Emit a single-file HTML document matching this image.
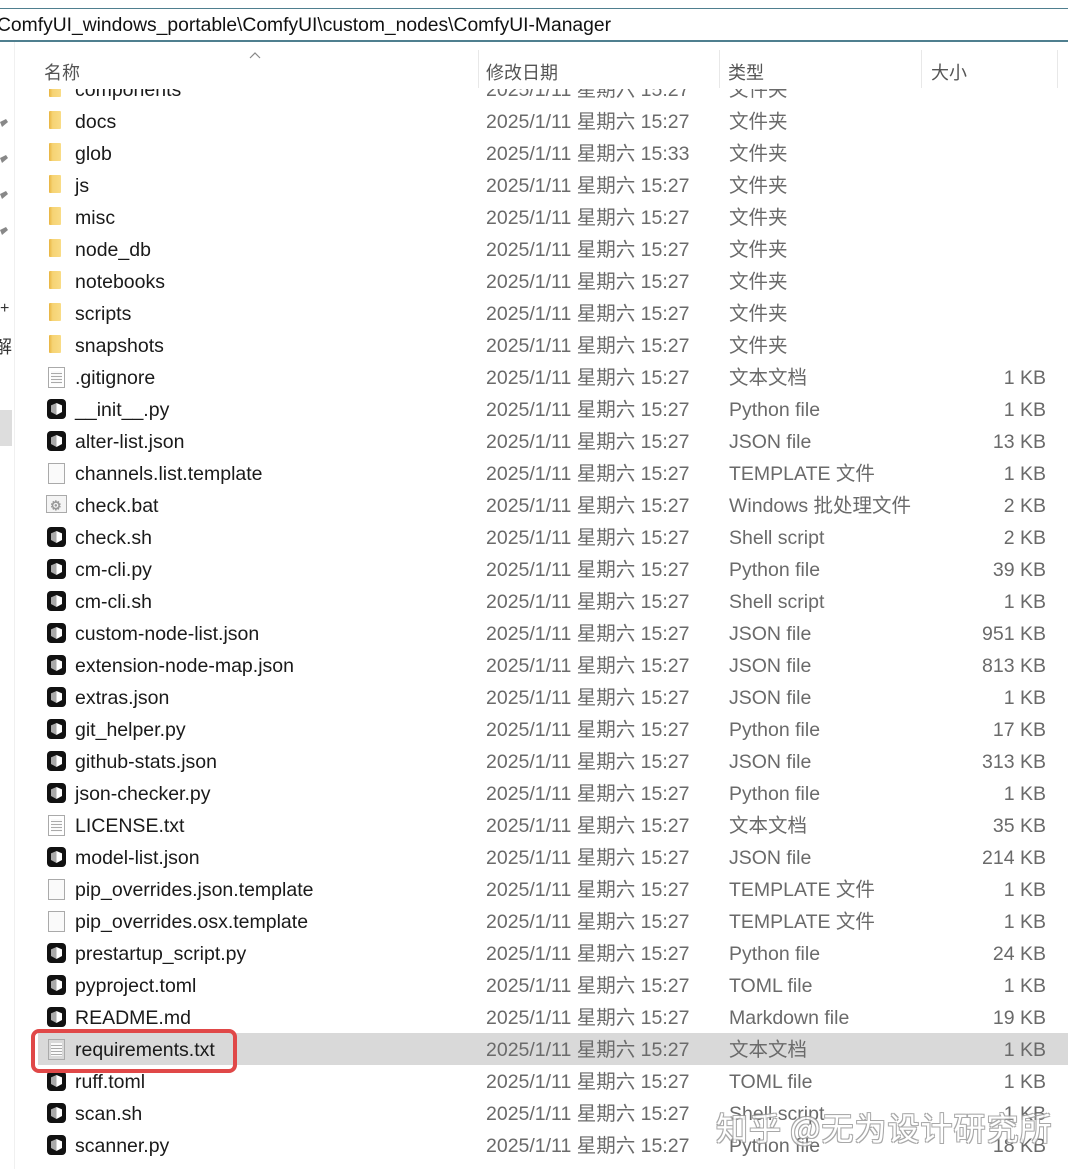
<!DOCTYPE html>
<html><head><meta charset="utf-8">
<style>
*{margin:0;padding:0;box-sizing:border-box}
body{width:1068px;height:1169px;overflow:hidden;background:#fff;position:relative;font-family:"Liberation Sans","Noto Sans CJK SC",sans-serif;}
.addr{position:absolute;left:0;top:8px;width:1068px;height:34px;border-top:1px solid #4f7f8f;border-bottom:2px solid #4f7f8f;}
.addr span{position:absolute;left:-3px;top:1px;line-height:32px;font-size:19.3px;color:#111;white-space:nowrap}
.nav{position:absolute;left:0;top:42px;width:15px;height:1127px;border-right:1px solid #f0f0f0}
.hdr{position:absolute;left:16px;top:42px;width:1052px;height:47px;background:#fff;z-index:2}
.hdr span{position:absolute;top:17px;line-height:28px;font-size:18px;color:#555}
.hdr i{position:absolute;top:8px;width:1px;height:38px;background:#e8e8e8}
.list{position:absolute;left:0;top:73px;width:1068px;z-index:1}
.r{position:relative;height:32px;font-size:19.5px;white-space:nowrap;line-height:32px}
.r span{position:absolute;top:1px;height:32px;line-height:32px}
.r .n{left:75px;color:#1a1a1a}
.r .d{left:486px;color:#6a6a6a}
.r .t{left:729px;color:#6a6a6a}
.r .s{right:22px;color:#6a6a6a}
.sel{background:#d9d9d9;margin-left:38px}
.sel .n{left:37px}.sel .d{left:448px}.sel .t{left:691px}
.ic{position:absolute;left:47px;top:6px;width:19px;height:20px}
.f{left:49px;width:12px;height:18px;background:linear-gradient(90deg,#e8b440 0,#f6d374 30%,#f9dc86 100%);border-radius:1px}
.p{background:#111;border-radius:4px}
.p:after{content:"";position:absolute;left:4px;top:4px;width:11px;height:12px;background:linear-gradient(90deg,#aaa 50%,#fff 50%);clip-path:polygon(0 20%,50% 0,100% 20%,100% 75%,50% 100%,0 75%)}
.doc,.b{left:48px;width:17px;height:21px;background:#fafafa;border:1px solid #aaa}
.doc{background:repeating-linear-gradient(180deg,#fafafa 0 2px,#aaa 2px 3px);background-clip:content-box;padding:3px 2px}
.g{left:46px;width:21px;height:18px;border:1px solid #aaa;background:#f4f4f4}
.g:after{content:"⚙";position:absolute;left:3px;top:-6px;font-size:13px;color:#999}
.box{position:absolute;left:31px;top:1029px;width:206px;height:44px;border:4px solid #e04848;border-radius:8px;z-index:3}
.wm{position:absolute;left:716px;top:1104px;font-size:32px;color:#fff;z-index:4;letter-spacing:1px;text-shadow:1px 1px 0 #999,-1px -1px 0 #999,1px -1px 0 #999,-1px 1px 0 #999;font-family:"Noto Sans CJK SC",sans-serif;opacity:.85}
</style></head><body>
<div class="addr"><span>ComfyUI_windows_portable\ComfyUI\custom_nodes\ComfyUI-Manager</span></div>
<div class="nav"></div>
<div style="position:absolute;left:0;top:410px;width:12px;height:36px;background:#ddd"></div>
<div style="position:absolute;left:0;top:300px;font-size:16px;color:#333">+</div>
<div style="position:absolute;left:-6px;top:333px;font-size:18px;color:#333;font-family:'Noto Sans CJK SC',sans-serif">解</div>
<svg style="position:absolute;left:0;top:118px" width="10" height="130"><g fill="#888"><path d="M0 4l6-3 2 3-6 5z"/><path d="M0 40l6-3 2 3-6 5z"/><path d="M0 76l6-3 2 3-6 5z"/><path d="M0 112l6-3 2 3-6 5z"/></g></svg>
<div class="hdr">
<svg style="position:absolute;left:233px;top:9px" width="12" height="8"><path d="M1 7l5-5 5 5" fill="none" stroke="#888" stroke-width="1.2"/></svg>
<span style="left:28px">名称</span><i style="left:462px"></i>
<span style="left:470px">修改日期</span><i style="left:703px"></i>
<span style="left:712px">类型</span><i style="left:905px"></i>
<span style="left:915px">大小</span><i style="left:1041px"></i>
</div>
<div class="list">
<div class="r"><b class="ic f"></b><span class="n">components</span><span class="d">2025/1/11 星期六 15:27</span><span class="t">文件夹</span></div>
<div class="r"><b class="ic f"></b><span class="n">docs</span><span class="d">2025/1/11 星期六 15:27</span><span class="t">文件夹</span></div>
<div class="r"><b class="ic f"></b><span class="n">glob</span><span class="d">2025/1/11 星期六 15:33</span><span class="t">文件夹</span></div>
<div class="r"><b class="ic f"></b><span class="n">js</span><span class="d">2025/1/11 星期六 15:27</span><span class="t">文件夹</span></div>
<div class="r"><b class="ic f"></b><span class="n">misc</span><span class="d">2025/1/11 星期六 15:27</span><span class="t">文件夹</span></div>
<div class="r"><b class="ic f"></b><span class="n">node_db</span><span class="d">2025/1/11 星期六 15:27</span><span class="t">文件夹</span></div>
<div class="r"><b class="ic f"></b><span class="n">notebooks</span><span class="d">2025/1/11 星期六 15:27</span><span class="t">文件夹</span></div>
<div class="r"><b class="ic f"></b><span class="n">scripts</span><span class="d">2025/1/11 星期六 15:27</span><span class="t">文件夹</span></div>
<div class="r"><b class="ic f"></b><span class="n">snapshots</span><span class="d">2025/1/11 星期六 15:27</span><span class="t">文件夹</span></div>
<div class="r"><b class="ic doc"></b><span class="n">.gitignore</span><span class="d">2025/1/11 星期六 15:27</span><span class="t">文本文档</span><span class="s">1 KB</span></div>
<div class="r"><b class="ic p"></b><span class="n">__init__.py</span><span class="d">2025/1/11 星期六 15:27</span><span class="t">Python file</span><span class="s">1 KB</span></div>
<div class="r"><b class="ic p"></b><span class="n">alter-list.json</span><span class="d">2025/1/11 星期六 15:27</span><span class="t">JSON file</span><span class="s">13 KB</span></div>
<div class="r"><b class="ic b"></b><span class="n">channels.list.template</span><span class="d">2025/1/11 星期六 15:27</span><span class="t">TEMPLATE 文件</span><span class="s">1 KB</span></div>
<div class="r"><b class="ic g"></b><span class="n">check.bat</span><span class="d">2025/1/11 星期六 15:27</span><span class="t">Windows 批处理文件</span><span class="s">2 KB</span></div>
<div class="r"><b class="ic p"></b><span class="n">check.sh</span><span class="d">2025/1/11 星期六 15:27</span><span class="t">Shell script</span><span class="s">2 KB</span></div>
<div class="r"><b class="ic p"></b><span class="n">cm-cli.py</span><span class="d">2025/1/11 星期六 15:27</span><span class="t">Python file</span><span class="s">39 KB</span></div>
<div class="r"><b class="ic p"></b><span class="n">cm-cli.sh</span><span class="d">2025/1/11 星期六 15:27</span><span class="t">Shell script</span><span class="s">1 KB</span></div>
<div class="r"><b class="ic p"></b><span class="n">custom-node-list.json</span><span class="d">2025/1/11 星期六 15:27</span><span class="t">JSON file</span><span class="s">951 KB</span></div>
<div class="r"><b class="ic p"></b><span class="n">extension-node-map.json</span><span class="d">2025/1/11 星期六 15:27</span><span class="t">JSON file</span><span class="s">813 KB</span></div>
<div class="r"><b class="ic p"></b><span class="n">extras.json</span><span class="d">2025/1/11 星期六 15:27</span><span class="t">JSON file</span><span class="s">1 KB</span></div>
<div class="r"><b class="ic p"></b><span class="n">git_helper.py</span><span class="d">2025/1/11 星期六 15:27</span><span class="t">Python file</span><span class="s">17 KB</span></div>
<div class="r"><b class="ic p"></b><span class="n">github-stats.json</span><span class="d">2025/1/11 星期六 15:27</span><span class="t">JSON file</span><span class="s">313 KB</span></div>
<div class="r"><b class="ic p"></b><span class="n">json-checker.py</span><span class="d">2025/1/11 星期六 15:27</span><span class="t">Python file</span><span class="s">1 KB</span></div>
<div class="r"><b class="ic doc"></b><span class="n">LICENSE.txt</span><span class="d">2025/1/11 星期六 15:27</span><span class="t">文本文档</span><span class="s">35 KB</span></div>
<div class="r"><b class="ic p"></b><span class="n">model-list.json</span><span class="d">2025/1/11 星期六 15:27</span><span class="t">JSON file</span><span class="s">214 KB</span></div>
<div class="r"><b class="ic b"></b><span class="n">pip_overrides.json.template</span><span class="d">2025/1/11 星期六 15:27</span><span class="t">TEMPLATE 文件</span><span class="s">1 KB</span></div>
<div class="r"><b class="ic b"></b><span class="n">pip_overrides.osx.template</span><span class="d">2025/1/11 星期六 15:27</span><span class="t">TEMPLATE 文件</span><span class="s">1 KB</span></div>
<div class="r"><b class="ic p"></b><span class="n">prestartup_script.py</span><span class="d">2025/1/11 星期六 15:27</span><span class="t">Python file</span><span class="s">24 KB</span></div>
<div class="r"><b class="ic p"></b><span class="n">pyproject.toml</span><span class="d">2025/1/11 星期六 15:27</span><span class="t">TOML file</span><span class="s">1 KB</span></div>
<div class="r"><b class="ic p"></b><span class="n">README.md</span><span class="d">2025/1/11 星期六 15:27</span><span class="t">Markdown file</span><span class="s">19 KB</span></div>
<div class="r sel"><b class="ic doc" style="left:10px"></b><span class="n">requirements.txt</span><span class="d">2025/1/11 星期六 15:27</span><span class="t">文本文档</span><span class="s">1 KB</span></div>
<div class="r"><b class="ic p"></b><span class="n">ruff.toml</span><span class="d">2025/1/11 星期六 15:27</span><span class="t">TOML file</span><span class="s">1 KB</span></div>
<div class="r"><b class="ic p"></b><span class="n">scan.sh</span><span class="d">2025/1/11 星期六 15:27</span><span class="t">Shell script</span><span class="s">1 KB</span></div>
<div class="r"><b class="ic p"></b><span class="n">scanner.py</span><span class="d">2025/1/11 星期六 15:27</span><span class="t">Python file</span><span class="s">18 KB</span></div>
</div>
<div class="box"></div>
<div class="wm">知乎 @无为设计研究所</div>
</body></html>
